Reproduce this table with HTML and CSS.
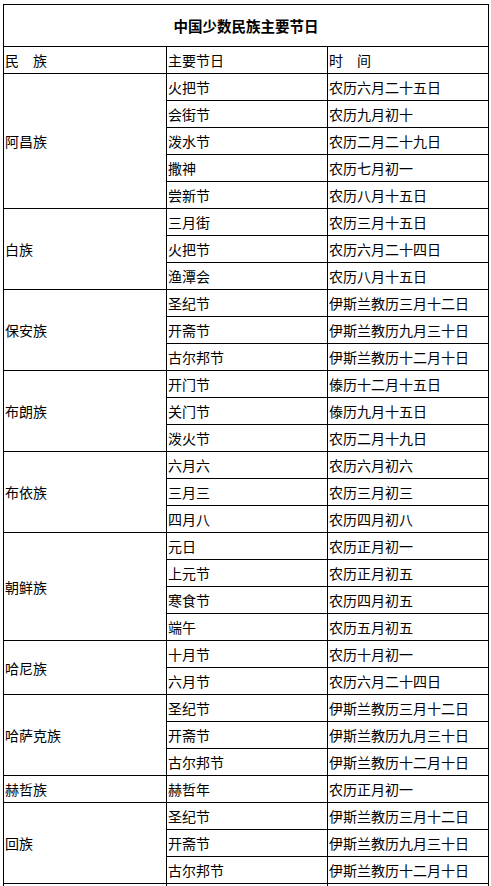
FILE: index.html
```html
<!DOCTYPE html>
<html lang="zh">
<head>
<meta charset="utf-8">
<title>中国少数民族主要节日</title>
<link rel="stylesheet" href="styles.css">
</head>
<body>
<table class="fest">
<colgroup><col class="c1"><col class="c2"><col class="c3"></colgroup>
<tr class="title-row"><th colspan="3" class="title">中国少数民族主要节日</th></tr>
<tr><td>民　族</td><td>主要节日</td><td>时　间</td></tr>
<tr><td rowspan="5">阿昌族</td><td>火把节</td><td>农历六月二十五日</td></tr>
<tr><td>会街节</td><td>农历九月初十</td></tr>
<tr><td>泼水节</td><td>农历二月二十九日</td></tr>
<tr><td>撒神</td><td>农历七月初一</td></tr>
<tr><td>尝新节</td><td>农历八月十五日</td></tr>
<tr><td rowspan="3">白族</td><td>三月街</td><td>农历三月十五日</td></tr>
<tr><td>火把节</td><td>农历六月二十四日</td></tr>
<tr><td>渔潭会</td><td>农历八月十五日</td></tr>
<tr><td rowspan="3">保安族</td><td>圣纪节</td><td>伊斯兰教历三月十二日</td></tr>
<tr><td>开斋节</td><td>伊斯兰教历九月三十日</td></tr>
<tr><td>古尔邦节</td><td>伊斯兰教历十二月十日</td></tr>
<tr><td rowspan="3">布朗族</td><td>开门节</td><td>傣历十二月十五日</td></tr>
<tr><td>关门节</td><td>傣历九月十五日</td></tr>
<tr><td>泼火节</td><td>农历二月十九日</td></tr>
<tr><td rowspan="3">布依族</td><td>六月六</td><td>农历六月初六</td></tr>
<tr><td>三月三</td><td>农历三月初三</td></tr>
<tr><td>四月八</td><td>农历四月初八</td></tr>
<tr><td rowspan="4">朝鲜族</td><td>元日</td><td>农历正月初一</td></tr>
<tr><td>上元节</td><td>农历正月初五</td></tr>
<tr><td>寒食节</td><td>农历四月初五</td></tr>
<tr><td>端午</td><td>农历五月初五</td></tr>
<tr><td rowspan="2">哈尼族</td><td>十月节</td><td>农历十月初一</td></tr>
<tr><td>六月节</td><td>农历六月二十四日</td></tr>
<tr><td rowspan="3">哈萨克族</td><td>圣纪节</td><td>伊斯兰教历三月十二日</td></tr>
<tr><td>开斋节</td><td>伊斯兰教历九月三十日</td></tr>
<tr><td>古尔邦节</td><td>伊斯兰教历十二月十日</td></tr>
<tr><td>赫哲族</td><td>赫哲年</td><td>农历正月初一</td></tr>
<tr><td rowspan="3">回族</td><td>圣纪节</td><td>伊斯兰教历三月十二日</td></tr>
<tr><td>开斋节</td><td>伊斯兰教历九月三十日</td></tr>
<tr><td>古尔邦节</td><td>伊斯兰教历十二月十日</td></tr>
<tr class="more"><td></td><td></td><td></td></tr>
</table>
</body>
</html>
```
FILE: styles.css
```css
html, body {
  margin: 0;
  padding: 0;
  background: #ffffff;
}
body {
  padding: 4px 0 0 3px;
  font-family: "Noto Sans CJK SC", "Noto Sans", sans-serif;
  font-size: 14px;
  color: #000000;
}
.fest {
  border-collapse: collapse;
  table-layout: fixed;
  width: 485px;
}
.c1 { width: 163px; }
.c2 { width: 161px; }
.c3 { width: 161px; }
.fest td, .fest th {
  border: 1px solid #000000;
  padding: 0 0 0 1px;
  height: 26px;
  line-height: 18px;
  vertical-align: middle;
  text-align: left;
  white-space: nowrap;
  overflow: hidden;
}
.fest .title {
  height: 41px;
  text-align: center;
  font-weight: bold;
  font-size: 14.5px;
  padding: 0;
}
```
